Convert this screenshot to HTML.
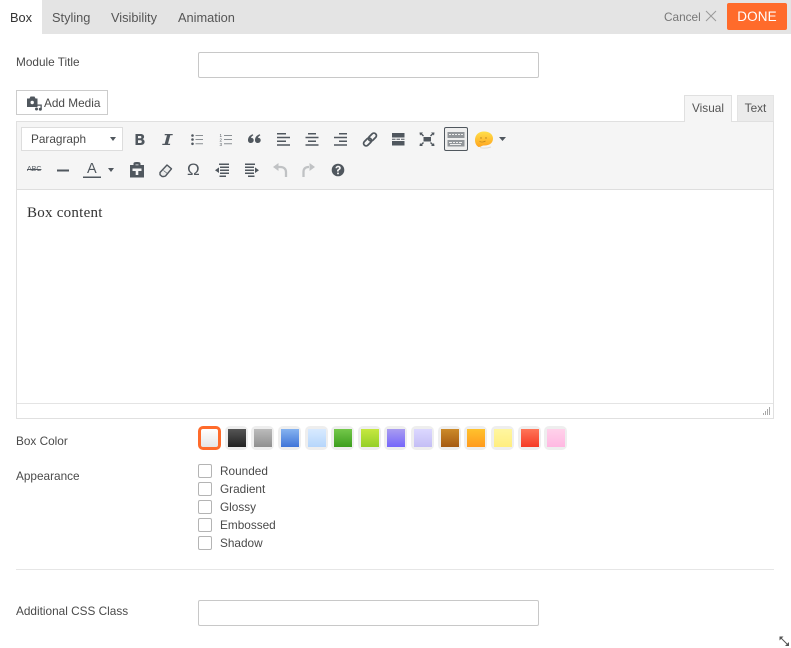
<!DOCTYPE html>
<html>
<head>
<meta charset="utf-8">
<style>
html,body{margin:0;padding:0;background:#fff}
body{width:791px;height:648px;position:relative;overflow:hidden;font-family:"Liberation Sans",Arial,sans-serif;font-size:11.8px;color:#4a4a4a}
.a{position:absolute;white-space:nowrap}
.inp{position:absolute;box-sizing:border-box;background:#fff;border:1px solid #c8c8c8;border-radius:2px}
.sw{position:absolute;top:426px;width:23px;height:24px;border-radius:5px;background:#eee}
.sw i{position:absolute;left:3px;top:3px;width:18px;height:18px;display:block}
.cb{position:absolute;left:198px;width:14px;height:14px;box-sizing:border-box;border:1px solid #b4b4b4;border-radius:2px;background:#fff}
svg{position:absolute;overflow:visible}
</style>
</head>
<body>
<div class="a" style="left:0;top:0;width:791px;height:34px;background:#e4e4e4"></div>
<div class="a" style="left:0;top:0;width:42px;height:34px;background:#fff"></div>
<div class="a" style="left:10px;top:10px;font-size:12.8px;line-height:16px;color:#333">Box</div>
<div class="a" style="left:52px;top:10px;font-size:12.8px;line-height:16px;color:#555">Styling</div>
<div class="a" style="left:111px;top:10px;font-size:12.8px;line-height:16px;color:#555">Visibility</div>
<div class="a" style="left:178px;top:10px;font-size:12.8px;line-height:16px;color:#555">Animation</div>
<div class="a" style="left:664px;top:10px;font-size:11.8px;line-height:15px;color:#777">Cancel</div>
<svg style="left:705px;top:10px" width="12" height="12" viewBox="0 0 12 12"><path d="M1 1L11 11M11 1L1 11" stroke="#9a9a9a" stroke-width="1" fill="none"/></svg>
<div class="a" style="left:727px;top:3px;width:60px;height:27px;background:#ff6b2b;border-radius:2px;color:#fff;font-size:13.5px;line-height:27px;text-align:center;letter-spacing:.1px">DONE</div>

<div class="a" style="left:16px;top:55px;line-height:15px">Module Title</div>
<div class="inp" style="left:198px;top:52px;width:341px;height:26px"></div>

<div class="a" style="left:16px;top:90px;width:92px;height:25px;box-sizing:border-box;border:1px solid #ccc;background:#fff"></div>
<svg style="left:26px;top:96px" width="17" height="15" viewBox="0 0 17 15"><path d="M1 2.500h2.500l1-2h4l1 2H11.500v8.500H1z" fill="#50575e"/><circle cx="6.200" cy="6.500" r="1.700" fill="#fff"/><path d="M11.500 8.500h4.300v5h-1.300v-3.700h-3z" fill="#50575e"/><circle cx="10.500" cy="13" r="1.500" fill="#50575e"/><circle cx="14.300" cy="13.300" r="1.500" fill="#50575e"/></svg>
<div class="a" style="left:44px;top:96px;line-height:14px;color:#4a4a4a">Add Media</div>

<div class="a" style="left:684px;top:95px;width:48px;height:27px;box-sizing:border-box;background:#f5f5f5;border:1px solid #e0e0e0;border-bottom:none;text-align:center;line-height:25px;z-index:2;color:#555">Visual</div>
<div class="a" style="left:737px;top:95px;width:37px;height:26px;box-sizing:border-box;background:#ebebeb;border:1px solid #e4e4e4;border-bottom:none;text-align:center;line-height:25px;color:#555">Text</div>

<div class="a" style="left:16px;top:121px;width:758px;height:298px;box-sizing:border-box;border:1px solid #e0e0e0;background:#fff"></div>
<div class="a" style="left:17px;top:122px;width:756px;height:67px;background:#f5f5f5;border-bottom:1px solid #dedede"></div>
<div class="a" style="left:17px;top:403px;width:756px;height:1px;background:#e4e4e4"></div>

<div class="a" style="left:21px;top:127px;width:102px;height:24px;box-sizing:border-box;background:#fff;border:1px solid #ddd"></div>
<div class="a" style="left:31px;top:132px;line-height:14px;color:#4a4a4a">Paragraph</div>
<svg style="left:110px;top:137px" width="6" height="4"><path d="M0 0h6L3 4z" fill="#50575e"/></svg>

<svg style="left:0;top:0" width="791" height="200" viewBox="0 0 791 200">
<g fill="#50575e">
<path fill-rule="evenodd" d="M135.500 134h5c2.500 0 3.600 1.200 3.600 2.800 0 1.100-.6 2-1.600 2.300 1.400.4 2.100 1.400 2.100 2.700 0 2-1.500 3.200-3.900 3.200h-5.200zM138 136v2.300h2c.9 0 1.400-.4 1.400-1.200s-.5-1.100-1.400-1.100zM138 140.200v2.800h2.300c1 0 1.500-.5 1.500-1.400s-.5-1.400-1.500-1.400z"/>
<path d="M164.800 134h8l-.2 1.200h-2.300l-2.300 8.600h2.200l-.2 1.200h-7.800l.2-1.200h2.300l2.300-8.600h-2.400z"/>
<circle cx="192.500" cy="135.500" r="1.300"/><circle cx="192.500" cy="139.500" r="1.300"/><circle cx="192.500" cy="143.800" r="1.300"/>
<path d="M195.500 135h7.500v1h-7.500zM195.500 139h7.500v1h-7.500zM195.500 143.300h7.500v1h-7.500z" opacity=".65"/>
<path d="M224 135h8v1h-8zM224 139h8v1h-8zM224 143.300h8v1h-8z" opacity=".65"/>
<path d="M248 140.200c0-3 1.700-5 4.800-6l.5 1.200c-1.300.6-2.200 1.400-2.300 2.500 1.600-.1 2.700.9 2.700 2.400 0 1.500-1.100 2.700-2.800 2.700-1.800 0-2.900-1.100-2.900-2.800zM255 140.200c0-3 1.700-5 4.800-6l.5 1.200c-1.300.6-2.200 1.400-2.300 2.500 1.600-.1 2.700.9 2.700 2.400 0 1.500-1.100 2.700-2.800 2.700-1.800 0-2.900-1.100-2.900-2.800z"/>
<path d="M277 133h9v1.500h-9zM277 136.800h13v1.500h-13zM277 140.500h9v1.500h-9zM277 144.200h13v1.500h-13z"/>
<path d="M308 133h8v1.500h-8zM305.500 136.800h13v1.500h-13zM308 140.500h8v1.500h-8zM305.500 144.200h13v1.500h-13z"/>
<path d="M339 133h8v1.500h-8zM334 136.800h13v1.500h-13zM339 140.500h8v1.500h-8zM334 144.200h13v1.500h-13z"/>
<path d="M392 133h12.500v4.500h-12.500zM392 141h12.500v4.500h-12.500zM392 138.700h3.500v1.100h-3.500zM396.500 138.700h3.500v1.100h-3.500zM401 138.700h3.500v1.100h-3.500z"/>
<rect x="423.500" y="137" width="7.500" height="4.500"/>
<path d="M419.500 132.500h3.500l-1 1 2 2-1 1-2-2-1 1zM434.500 132.500h-3.500l1 1-2 2 1 1 2-2 1 1zM419.500 146h3.500l-1-1 2-2-1-1-2 2-1-1zM434.500 146h-3.500l1-1-2-2 1-1 2 2 1-1z"/>
<path d="M499 137h7l-3.500 4z"/>
<path d="M108 168h6l-3 4z"/>
<path d="M57 169.500h12v2h-12z"/>
<path d="M83 176.500h18v1.500h-18z"/>
<path fill-rule="evenodd" d="M130 165h3.500v-1.500c0-1 .8-1.500 3.500-1.500s3.500.5 3.500 1.500v1.500h3.500v12.500h-14zM135.500 164.500v.8h3v-.8zM132.500 168.500v2.500h3.200v4h2.600v-4h3.200v-2.500z"/>
<path fill-rule="evenodd" d="M338 163.700a6.300 6.300 0 1 0 0 12.600 6.300 6.300 0 0 0 0-12.600zM335.500 168.300c0-1.500 1.100-2.500 2.700-2.500 1.500 0 2.600.9 2.600 2.200 0 1-.5 1.500-1.300 2-.6.400-.8.600-.8 1.200v.3h-1.700v-.5c0-.9.300-1.400 1.100-1.900.6-.4.900-.6.900-1.100 0-.5-.4-.8-.9-.8-.6 0-1 .4-1 1.100zM337.100 172.600h1.800v1.600h-1.800z"/>
<path d="M219 163.500h10v1.500h-10zM220 166.500h9v1.500h-9zM220 169.500h9v1.500h-9zM220 172.500h9v1.500h-9zM219.500 175.500h6.500v1.500h-6.500zM215 170.200l4-2.800v5.600z"/>
<path d="M245 163.500h10v1.500h-10zM245 166.500h9v1.500h-9zM245 169.500h9v1.500h-9zM245 172.500h9v1.500h-9zM248 175.500h6.500v1.500h-6.500zM259 170.200l-4-2.800v5.600z"/>
</g>
<text x="219.500" y="137" font-size="4.500" font-family="Liberation Sans" fill="#50575e">1</text>
<text x="219.500" y="141.500" font-size="4.500" font-family="Liberation Sans" fill="#50575e">2</text>
<text x="219.500" y="146" font-size="4.500" font-family="Liberation Sans" fill="#50575e">3</text>
<g transform="rotate(-45 370 139.500)" fill="none" stroke="#50575e" stroke-width="1.800">
<rect x="362" y="137" width="9" height="5" rx="2.500"/>
<rect x="369" y="137" width="9" height="5" rx="2.500"/>
</g>
<path d="M167 165l4.500 3.800-6 7.200-1.500.5-2 0-2-1.800 0-2.200z" fill="#eceded" stroke="#50575e" stroke-width="1.400" stroke-linejoin="round"/>
<path d="M163.500 170.500l4.500 3.500" stroke="#50575e" stroke-width=".6" fill="none"/>
<g fill="none" stroke="#c0c2c4" stroke-width="2.300">
<path d="M277 167h3.500c3.500 0 5.500 2.200 5.500 5v5"/>
<path d="M309 167h-.5c-3.500 0-5 2.200-5 5v5"/>
</g>
<path d="M278.500 163v8l-5.500-4z" fill="#c0c2c4"/>
<path d="M309.500 163v8l5.500-4z" fill="#c0c2c4"/>
<rect x="444.500" y="127.500" width="23" height="23" rx="1.500" fill="#eee" stroke="#50575e" stroke-width="1"/>
<g fill="#92969a"><rect x="447.500" y="132" width="17" height="6"/><rect x="447.500" y="140" width="17" height="6.500"/></g>
<g fill="#eee"><rect x="449" y="134" width="2" height="1"/><rect x="452" y="134" width="2" height="1"/><rect x="455" y="134" width="2" height="1"/><rect x="458" y="134" width="2" height="1"/><rect x="461" y="134" width="2" height="1"/><rect x="449" y="142" width="3" height="1"/><rect x="453" y="142" width="2" height="1"/><rect x="456" y="142" width="2" height="1"/><rect x="459" y="142" width="3" height="1"/><rect x="450" y="144" width="11" height="1"/></g>
<defs><linearGradient id="e" x1="0" y1="0" x2="0" y2="1"><stop offset="0" stop-color="#ffe04a"/><stop offset="1" stop-color="#ffa41e"/></linearGradient></defs>
<path d="M475 140c0-5 3.500-8.500 9-8.500s9 3 9 7c0 4.500-3.700 7-8.500 7-1.500 0-2.500.3-4 1.300l-2 .2c-2.300-1.500-3.500-3.800-3.500-7z" fill="url(#e)"/>
<path d="M480 147.500c3 1 7 .8 11-.5" stroke="#deded6" stroke-width="1" fill="none"/>
<circle cx="481" cy="138" r=".7" fill="#b07e20"/><circle cx="486" cy="138" r=".7" fill="#b07e20"/>
<path d="M479.500 141.300c1.500 1 4 1 6-.3" stroke="#c08418" stroke-width=".8" fill="none"/>
</svg>

<div class="a" style="left:27px;top:166px;font-size:7px;line-height:8px;color:#50575e;text-decoration:line-through">ABC</div>
<div class="a" style="left:87px;top:161px;font-size:14.500px;line-height:16px;color:#50575e">A</div>
<div class="a" style="left:187px;top:161px;font-family:'Liberation Sans',sans-serif;font-size:17px;line-height:18px;color:#50575e">&#937;</div>

<div class="a" style="left:27px;top:204px;font-family:'Liberation Serif',serif;font-size:15px;line-height:18px;color:#333;letter-spacing:.25px">Box content</div>

<svg style="left:762px;top:407px" width="9" height="9" viewBox="0 0 9 9"><g fill="#a8a8a8"><rect x="7" y="0" width="1" height="8"/><rect x="5" y="2" width="1" height="6"/><rect x="3" y="4" width="1" height="4"/><rect x="1" y="6" width="1" height="2"/></g></svg>

<div class="a" style="left:16px;top:434px;line-height:15px">Box Color</div>
<div class="sw" style="left:198px;background:#ff6b2b"><i style="left:3px;top:3px;width:17px;height:18px;background:linear-gradient(#fff,#e6e6e6);border-radius:2px"></i></div>
<div class="sw" style="left:225px"><i style="background:linear-gradient(#555,#222)"></i></div>
<div class="sw" style="left:251px"><i style="background:linear-gradient(#bbb,#8f8f8f)"></i></div>
<div class="sw" style="left:278px"><i style="background:linear-gradient(#86b3f0,#3f74d8)"></i></div>
<div class="sw" style="left:305px"><i style="background:linear-gradient(#d8eaff,#b6d6fb)"></i></div>
<div class="sw" style="left:331px"><i style="background:linear-gradient(#74c84a,#3c9e1e)"></i></div>
<div class="sw" style="left:358px"><i style="background:linear-gradient(#c6e840,#94cf28)"></i></div>
<div class="sw" style="left:384px"><i style="background:linear-gradient(#a99cf0,#7566fa)"></i></div>
<div class="sw" style="left:411px"><i style="background:linear-gradient(#dcd8ff,#c4bef5)"></i></div>
<div class="sw" style="left:438px"><i style="background:linear-gradient(#cc8a2a,#a55a12)"></i></div>
<div class="sw" style="left:464px"><i style="background:linear-gradient(#ffc22d,#ff9a1e)"></i></div>
<div class="sw" style="left:491px"><i style="background:linear-gradient(#fff6a0,#ffee80)"></i></div>
<div class="sw" style="left:518px"><i style="background:linear-gradient(#ff7558,#f53a25)"></i></div>
<div class="sw" style="left:544px"><i style="background:linear-gradient(#ffd2ea,#ffb8e2)"></i></div>

<div class="a" style="left:16px;top:469px;line-height:15px">Appearance</div>
<div class="cb" style="top:464px"></div><div class="a" style="left:220px;top:464px;line-height:15px">Rounded</div>
<div class="cb" style="top:482px"></div><div class="a" style="left:220px;top:482px;line-height:15px">Gradient</div>
<div class="cb" style="top:500px"></div><div class="a" style="left:220px;top:500px;line-height:15px">Glossy</div>
<div class="cb" style="top:518px"></div><div class="a" style="left:220px;top:518px;line-height:15px">Embossed</div>
<div class="cb" style="top:536px"></div><div class="a" style="left:220px;top:536px;line-height:15px">Shadow</div>

<div class="a" style="left:16px;top:569px;width:758px;height:1px;background:#e6e6e6"></div>

<div class="a" style="left:16px;top:604px;line-height:15px">Additional CSS Class</div>
<div class="inp" style="left:198px;top:600px;width:341px;height:26px"></div>

<svg style="left:779px;top:636px" width="11" height="11" viewBox="0 0 11 11"><path d="M2 2L9 9" stroke="#555" stroke-width="1"/><path d="M0.500 0.500h4L.5 4.500zM10 10h-4l4-4z" fill="#555"/></svg>
</body>
</html>
